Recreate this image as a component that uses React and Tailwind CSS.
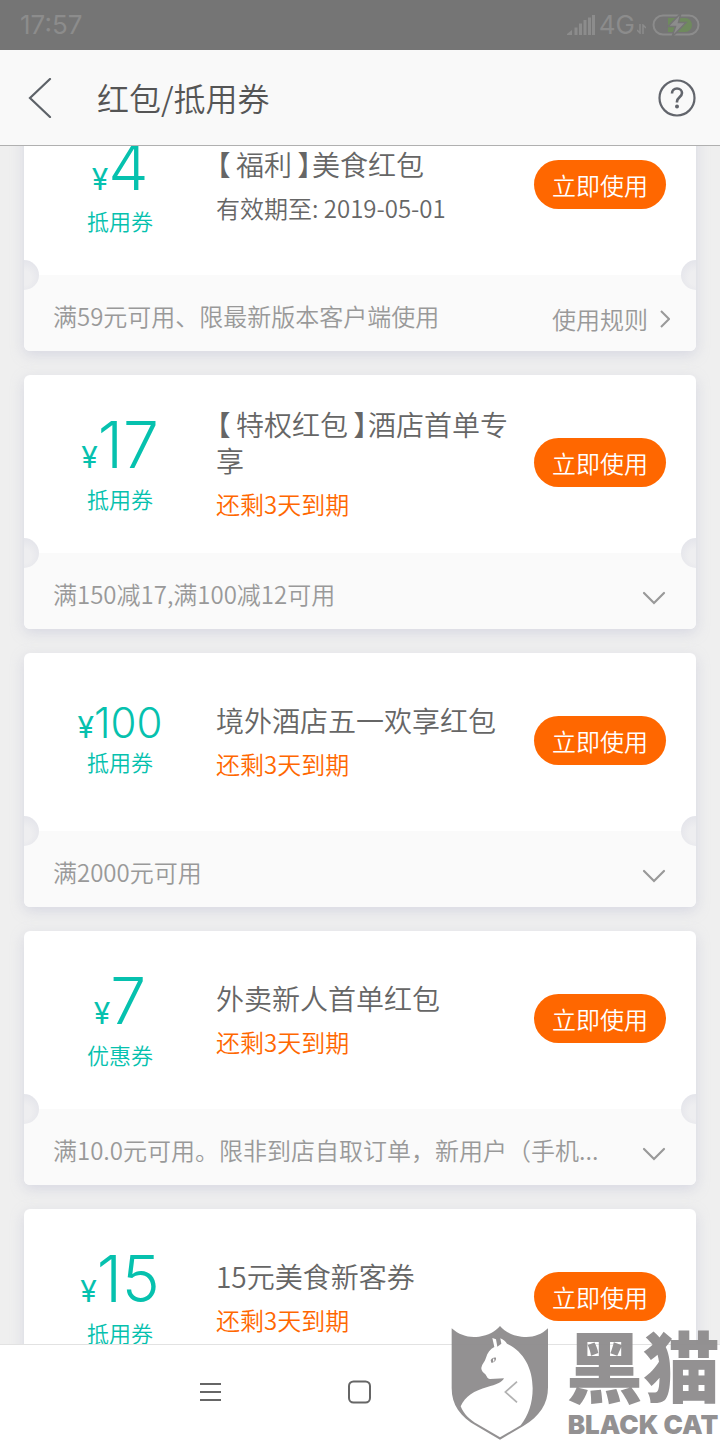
import React from 'react';

const coupons = [
  {
    id: 1,
    amount: '4',
    type: '抵用券',
    tag: '福利',
    title: '美食红包',
    date: '有效期至: 2019-05-01',
    rule: '满59元可用、限最新版本客户端使用',
    link: true,
  },
  {
    id: 2,
    amount: '17',
    type: '抵用券',
    tag: '特权红包',
    title: '酒店首单专享',
    soon: '还剩3天到期',
    rule: '满150减17,满100减12可用',
  },
  {
    id: 3,
    amount: '100',
    type: '抵用券',
    title: '境外酒店五一欢享红包',
    soon: '还剩3天到期',
    rule: '满2000元可用',
  },
  {
    id: 4,
    amount: '7',
    type: '优惠券',
    title: '外卖新人首单红包',
    soon: '还剩3天到期',
    rule: '满10.0元可用。限非到店自取订单，新用户（手机...',
  },
  {
    id: 5,
    amount: '15',
    type: '抵用券',
    title: '15元美食新客券',
    soon: '还剩3天到期',
    rule: '满15元可用',
  },
];

const StatusBar = () => (
  <div className="flex h-[50px] shrink-0 items-center justify-between bg-[#757575] px-5 text-[26px] leading-8 text-[#8c8c8c]">
    <span className="font-['Inter'] font-normal">17:57</span>
    <div className="flex items-center">
      {/* Signal */}
      <svg width="28" height="20" viewBox="0 0 28 20" fill="currentColor">
        <path d="M0 20v-1l5-4v5zM7.500 12.500h3V20h-3zM12 8.500h3V20h-3zM16.500 5h3v15h-3zM21 2.500h3V20h-3zM25 0h3v20h-3z" />
      </svg>
      <span className="ml-1 font-['Inter'] font-normal">4G</span>
      <svg className="mt-2 ml-0.5" width="9" height="10" viewBox="0 0 9 10" fill="none" stroke="currentColor" strokeWidth="1.500">
        <path d="M3 0v9L0 6M6 10V1l3 3" />
      </svg>
      {/* Battery */}
      <svg className="ml-1.5" width="48" height="24" viewBox="0 0 48 24">
        <path d="M16 5h17a7 7 0 0 1 0 14H16z" fill="#6f8a5e" />
        <rect x="1.500" y="2.500" width="45" height="19" rx="9.500" fill="none" stroke="currentColor" strokeWidth="2" />
        <path d="M29 0 16 13.500h7.500L20 24l14-14.500h-7.500z" fill="currentColor" stroke="#757575" strokeWidth="1.500" />
      </svg>
    </div>
  </div>
);

const Header = () => (
  <header className="flex h-24 shrink-0 items-center border-b border-[#b0b0b0] bg-[#f9f9f9] px-6 text-[#555]">
    <button aria-label="返回" className="flex h-12 w-8 items-center justify-center">
      <svg width="24" height="40" viewBox="0 0 24 40" fill="none" stroke="#5d6268" strokeWidth="2.200" strokeLinecap="round">
        <path d="M22 1 2 20l20 19" />
      </svg>
    </button>
    <h1 className="ml-[41px] flex-1 pb-0.5 text-[32px] leading-10">红包/抵用券</h1>
    <button aria-label="帮助">
      <svg width="38" height="38" viewBox="0 0 38 38" fill="none" stroke="#62656c" strokeWidth="2.200">
        <circle cx="19" cy="19" r="17.500" />
        <path d="M14 14.500c0-3 2-5 5-5s5 2 5 4.600c0 4-5 4.400-5 8.400v1" strokeWidth="2.600" />
        <circle cx="19" cy="27.500" r="2" fill="#62656c" stroke="none" />
      </svg>
    </button>
  </header>
);

const CouponCard = ({ coupon }) => (
  <article className="relative rounded-md bg-white shadow-[0_4px_14px_rgba(170,172,200,0.35)]">
    <div className="flex h-[178px] items-center pr-[30px]">
      <div className="flex w-48 shrink-0 flex-col items-center pb-1.5 text-[#06c1ae]">
        <p className="mb-0.5 font-['Inter'] leading-none font-light">
          <span className="text-[30px] font-normal">¥</span>
          <span className={coupon.amount.length > 2 ? 'text-[42px] leading-[42px]' : 'text-[64px] leading-[72px]'}>
            {coupon.amount}
          </span>
        </p>
        <p className="text-[22px] leading-[30px]">{coupon.type}</p>
      </div>
      <div className="min-w-0 flex-1 pr-5 pb-0.5">
        <h2 className="text-[28px] leading-9 text-[#666] [font-feature-settings:'palt']">
          {coupon.tag && (
            <>
              【<span className="mx-1.5">{coupon.tag}</span>】
            </>
          )}
          {coupon.title}
        </h2>
        {coupon.date && <p className="mt-2.5 text-2xl leading-8 text-[#666]">{coupon.date}</p>}
        {coupon.soon && <p className="mt-2.5 text-2xl leading-8 text-[#ff6700]">{coupon.soon}</p>}
      </div>
      <button className="mb-[3px] h-[49px] w-[132px] shrink-0 rounded-full bg-[#ff6700] text-2xl text-white">
        立即使用
      </button>
    </div>

    <div className="flex h-[76px] items-center justify-between rounded-b-md bg-[#fafafa] pt-1.5 pr-[30px] pl-[29px] text-2xl leading-8 text-[#999]">
      <p className="truncate">{coupon.rule}</p>
      {coupon.link ? (
        <a href="#rules" className="-mr-1 flex shrink-0 items-center gap-3 pt-1.5">
          使用规则
          <svg width="10" height="18" viewBox="0 0 10 18" fill="none" stroke="currentColor" strokeWidth="2">
            <path d="m1 1 8 8-8 8" />
          </svg>
        </a>
      ) : (
        <button aria-label="展开" className="shrink-0 pt-2">
          <svg width="24" height="14" viewBox="0 0 24 14" fill="none" stroke="currentColor" strokeWidth="2.200" strokeLinecap="round">
            <path d="m2 2 10 10L22 2" />
          </svg>
        </button>
      )}
    </div>

    {/* Ticket notches */}
    <div className="absolute top-[163px] left-0 h-[30px] w-[15px] rounded-r-full bg-[radial-gradient(circle_at_0%_60%,#eeeef0_30%,#dfe0e8_100%)]" />
    <div className="absolute top-[163px] right-0 h-[30px] w-[15px] rounded-l-full bg-[radial-gradient(circle_at_100%_60%,#eeeef0_30%,#dfe0e8_100%)]" />
  </article>
);

const NavBar = () => (
  <nav className="flex h-24 shrink-0 items-center justify-center gap-[126px] border-t border-[#e2e2e2] bg-white pb-0.5 text-[#666]">
    <button aria-label="菜单">
      <svg width="24" height="24" viewBox="0 0 24 24" fill="none" stroke="currentColor" strokeWidth="2">
        <path d="M2 4h21M2 12h21M2 20h21" />
      </svg>
    </button>
    <button aria-label="主页">
      <svg width="24" height="24" viewBox="0 0 24 24" fill="none" stroke="currentColor" strokeWidth="2">
        <rect x="1" y="1.500" width="21" height="21" rx="4.500" />
      </svg>
    </button>
    <button aria-label="后退">
      <svg width="24" height="24" viewBox="0 0 24 24" fill="none" stroke="currentColor" strokeWidth="2">
        <path d="M19 2 8 12l11 10" />
      </svg>
    </button>
  </nav>
);

const Watermark = () => (
  <div className="pointer-events-none absolute right-0 bottom-0 flex items-end gap-4 text-[#8e8c8d] opacity-95">
    <svg width="100" height="116" viewBox="30 40 300 348">
      <path
        d="M35 53c25 22 52 29 82 25 28-4 49-15 63-32 15 17 36 28 64 32 30 4 57-3 80-25v177c0 50-25 87-74 116l-70 41-70-41C60 318 35 283 35 232z"
        fill="currentColor"
      />
      <path
        d="M172 108 168 86l-11-4 6 27c-12 6-21 17-25 32-3 12-12 18-14 30-1 9 6 15 12 20 5 5 4 13 14 14l42-2c-6 12-24 19-50 26-40 11-66 28-80 58 10 24 26 40 51 54l67 39 62-36c23-30 36-65 36-111 0-62-28-111-77-134-4-7-12-13-20-16l3 16z"
        fill="#fff"
      />
      <path d="M152 149c3-7 9-9 16-8 1 8-5 15-14 15z" fill="currentColor" />
      <path d="M161 143c3 2 3 8 0 11-3-3-3-8 0-11z" fill="#fff" />
      <path d="M231 213 196 244l35 31" fill="none" stroke="#b5b5b5" strokeWidth="5" />
    </svg>
    <div className="flex flex-col items-center gap-2.5">
      <span className="text-[77px] leading-[72px] font-black">黑猫</span>
      <span className="font-['Inter'] text-[26px] leading-[30px] font-black">BLACK CAT</span>
    </div>
  </div>
);

const App = () => {
  return (
    <div className="relative flex h-screen flex-col overflow-hidden bg-[#efefef] font-['Noto_Sans_CJK_SC',sans-serif] font-[350]">
      <StatusBar />
      <Header />
      <main className="min-h-0 flex-1 overflow-hidden px-6">
        {/* The list is scrolled a little way down */}
        <div className="-mt-[49px] flex flex-col gap-6">
          {coupons.map((coupon) => (
            <CouponCard key={coupon.id} coupon={coupon} />
          ))}
        </div>
      </main>
      <NavBar />
      <Watermark />
    </div>
  );
};

export default App;
